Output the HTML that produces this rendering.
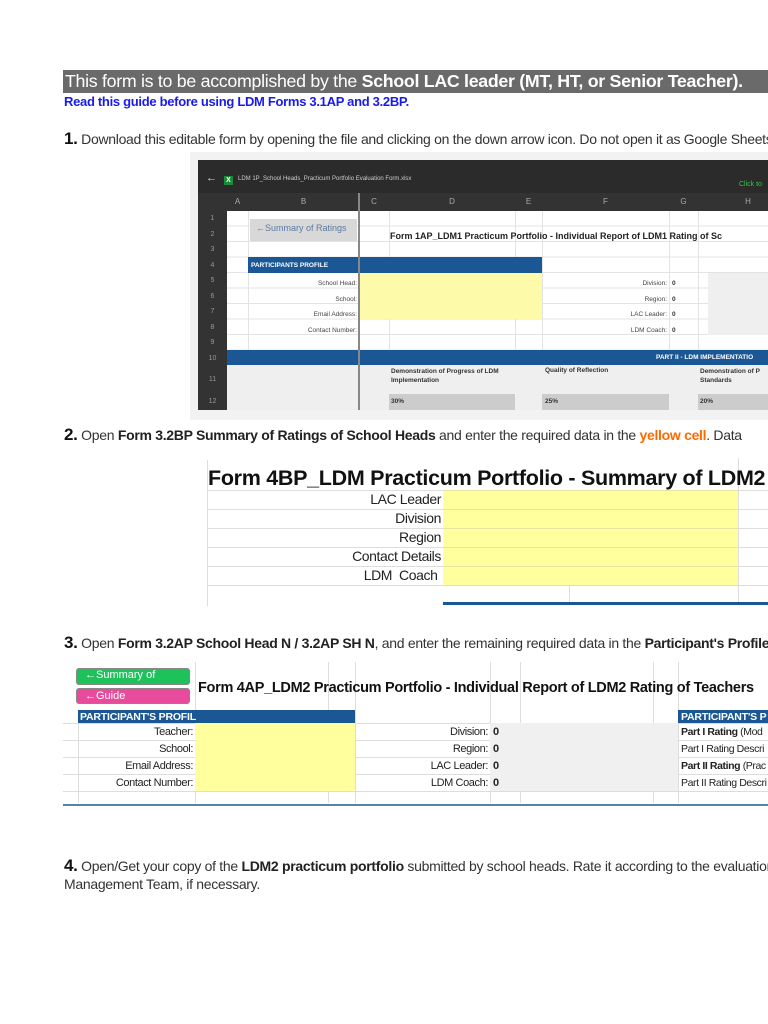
<!DOCTYPE html>
<html><head><meta charset="utf-8">
<style>
*{margin:0;padding:0;box-sizing:border-box}
html,body{width:768px;height:1024px;overflow:hidden;background:#fff;font-family:"Liberation Sans",Arial,sans-serif;color:#222}
.a{position:absolute;white-space:nowrap}
.t{font-size:14px;letter-spacing:-0.3px;color:#333}
.t b{color:#222}
.n{font-size:17px;font-weight:bold;color:#111}
.box{position:absolute;overflow:hidden}
.c{position:absolute}
</style></head><body>

<div class="a" style="left:63px;top:70px;width:705px;height:23px;background:#6a6a6a;color:#fff;font-size:17.8px;line-height:23px;padding-left:2px;letter-spacing:-0.3px;overflow:hidden">This form is to be accomplished by the <b>School LAC leader (MT, HT, or Senior Teacher).</b></div>
<div class="a" style="left:64px;top:94px;font-size:13px;font-weight:bold;color:#1a1aee;letter-spacing:-0.3px">Read this guide before using LDM Forms 3.1AP and 3.2BP.</div>

<div class="a t" style="left:64px;top:129px"><span class="n">1.</span> Download this editable form by opening the file and clicking on the down arrow icon. Do not open it as Google Sheets</div>

<!-- image 1 -->
<div class="box" style="left:190px;top:152px;width:578px;height:268px;background:#f2f2f2">
  <div class="c" style="left:8px;top:8px;width:570px;height:250px;background:#fff"></div>
  <div class="c" style="left:8px;top:8px;width:570px;height:33px;background:#2b2b2b"></div>
  <div class="c" style="left:16px;top:20px;color:#ddd;font-size:11px">←</div>
  <div class="c" style="left:34px;top:24px;width:9px;height:9px;background:#1d8a3a;color:#fff;font-size:7px;line-height:9px;text-align:center;font-weight:bold">X</div>
  <div class="c" style="left:48px;top:24px;color:#ccc;font-size:6px">LDM 1P_School Heads_Practicum Portfolio Evaluation Form.xlsx</div>
  <div class="c" style="left:549px;top:29px;color:#2ecc40;font-size:7px">Click to</div>
  <div class="c" style="left:8px;top:41px;width:570px;height:18px;background:#333"></div>
  <div class="c" style="left:8px;top:59px;width:29px;height:199px;background:#333"></div>
  <div class="c" style="left:37px;top:41px;width:21px;color:#aaa;font-size:8px;text-align:center;line-height:18px">A</div>
  <div class="c" style="left:58px;top:41px;width:111px;color:#aaa;font-size:8px;text-align:center;line-height:18px">B</div>
  <div class="c" style="left:169px;top:41px;width:30px;color:#aaa;font-size:8px;text-align:center;line-height:18px">C</div>
  <div class="c" style="left:199px;top:41px;width:126px;color:#aaa;font-size:8px;text-align:center;line-height:18px">D</div>
  <div class="c" style="left:325px;top:41px;width:27px;color:#aaa;font-size:8px;text-align:center;line-height:18px">E</div>
  <div class="c" style="left:352px;top:41px;width:127px;color:#aaa;font-size:8px;text-align:center;line-height:18px">F</div>
  <div class="c" style="left:479px;top:41px;width:29px;color:#aaa;font-size:8px;text-align:center;line-height:18px">G</div>
  <div class="c" style="left:508px;top:41px;width:100px;color:#aaa;font-size:8px;text-align:center;line-height:18px">H</div>
  <div class="c" style="left:8px;top:59px;width:29px;color:#999;font-size:7px;line-height:15.5px;text-align:center">1<br>2<br>3<br>4<br>5<br>6<br>7<br>8<br>9<br>10</div>
  <div class="c" style="left:8px;top:224px;width:29px;color:#999;font-size:7px;text-align:center">11</div>
  <div class="c" style="left:8px;top:246px;width:29px;color:#999;font-size:7px;text-align:center">12</div>
  <div class="c" style="left:37px;top:59px;width:541px;height:199px;background:repeating-linear-gradient(to bottom,transparent 0,transparent 14.5px,#e3e3e3 14.5px,#e3e3e3 15.5px)"></div>
  <div class="c" style="left:58px;top:59px;width:1px;height:199px;background:#e3e3e3"></div>
  <div class="c" style="left:199px;top:59px;width:1px;height:199px;background:#e3e3e3"></div>
  <div class="c" style="left:325px;top:59px;width:1px;height:199px;background:#e3e3e3"></div>
  <div class="c" style="left:352px;top:59px;width:1px;height:199px;background:#e3e3e3"></div>
  <div class="c" style="left:479px;top:59px;width:1px;height:199px;background:#e3e3e3"></div>
  <div class="c" style="left:508px;top:59px;width:1px;height:199px;background:#e3e3e3"></div>
  <div class="c" style="left:169px;top:121px;width:183px;height:46px;background:#fdfbaa"></div>
  <div class="c" style="left:518px;top:121px;width:60px;height:62px;background:#efefef"></div>
  <div class="c" style="left:58px;top:105px;width:294px;height:16px;background:#1b5795"></div>
  <div class="c" style="left:61px;top:110px;color:#fff;font-size:6.5px;font-weight:bold">PARTICIPANTS PROFILE</div>
  <div class="c" style="left:37px;top:198px;width:541px;height:15px;background:#1b5795"></div>
  <div class="c" style="left:466px;top:202px;color:#fff;font-size:6.5px;font-weight:bold">PART II - LDM IMPLEMENTATIO</div>
  <div class="c" style="left:37px;top:213px;width:541px;height:45px;background:#efefef"></div>
  <div class="c" style="left:199px;top:242px;width:126px;height:16px;background:#ccc"></div>
  <div class="c" style="left:352px;top:242px;width:127px;height:16px;background:#ccc"></div>
  <div class="c" style="left:508px;top:242px;width:70px;height:16px;background:#ccc"></div>
  <div class="c" style="left:201px;top:215px;font-size:6.5px;font-weight:bold;color:#333;line-height:9px">Demonstration of Progress of LDM<br>Implementation</div>
  <div class="c" style="left:355px;top:215px;font-size:6.5px;font-weight:bold;color:#333">Quality of Reflection</div>
  <div class="c" style="left:510px;top:215px;font-size:6.5px;font-weight:bold;color:#333;line-height:9px">Demonstration of P<br>Standards</div>
  <div class="c" style="left:201px;top:246px;font-size:6.5px;font-weight:bold;color:#333">30%</div>
  <div class="c" style="left:355px;top:246px;font-size:6.5px;font-weight:bold;color:#333">25%</div>
  <div class="c" style="left:510px;top:246px;font-size:6.5px;font-weight:bold;color:#333">20%</div>
  <div class="c" style="left:168px;top:41px;width:2px;height:217px;background:#888"></div>
  <div class="c" style="left:60px;top:67px;width:107px;height:22px;background:#d8d8d8;color:#5b7aa8;font-size:9px;line-height:18px;padding-left:6px">←Summary of Ratings</div>
  <div class="c" style="left:200px;top:79px;font-size:9px;font-weight:bold;color:#222">Form 1AP_LDM1 Practicum Portfolio - Individual Report of LDM1 Rating of Sc</div>
  <div class="c" style="left:58px;top:124px;width:109px;text-align:right;font-size:6.5px;color:#444;line-height:15.5px">School Head:<br>School:<br>Email Address:<br>Contact Number:</div>
  <div class="c" style="left:352px;top:124px;width:125px;text-align:right;font-size:6.5px;color:#444;line-height:15.5px">Division:<br>Region:<br>LAC Leader:<br>LDM Coach:</div>
  <div class="c" style="left:482px;top:124px;font-size:6.5px;font-weight:bold;color:#333;line-height:15.5px">0<br>0<br>0<br>0</div>
</div>

<div class="a t" style="left:64px;top:425px"><span class="n">2.</span> Open <b>Form 3.2BP Summary of Ratings of School Heads</b> and enter the required data in the <b style="color:#ff6a00">yellow cell</b>. Data</div>

<!-- image 2 -->
<div class="box" style="left:200px;top:458px;width:568px;height:150px">
  <div class="c" style="left:7px;top:2px;width:1px;height:146px;background:#ddd"></div>
  <div class="c" style="left:7px;top:32px;width:561px;height:113px;background:repeating-linear-gradient(to bottom,#ddd 0,#ddd 1px,transparent 1px,transparent 19px)"></div>
  <div class="c" style="left:243px;top:32px;width:295px;height:95px;background:#ffff9e"></div>
  <div class="c" style="left:243px;top:32px;width:295px;height:95px;background:repeating-linear-gradient(to bottom,#e5e5a0 0,#e5e5a0 1px,transparent 1px,transparent 19px)"></div>
  <div class="c" style="left:369px;top:127px;width:1px;height:18px;background:#ddd"></div>
  <div class="c" style="left:538px;top:0px;width:1px;height:145px;background:#ddd"></div>
  <div class="c" style="left:243px;top:144px;width:325px;height:3px;background:#1b5795"></div>
  <div class="c" style="left:8px;top:8px;font-size:21.5px;font-weight:bold;color:#111;letter-spacing:-0.3px">Form 4BP_LDM Practicum Portfolio - Summary of LDM2</div>
  <div class="c" style="left:8px;top:32px;width:233px;text-align:right;font-size:14px;line-height:19px;color:#222;letter-spacing:-0.4px">LAC Leader<br>Division<br>Region<br>Contact Details<br>LDM&nbsp; Coach&nbsp;</div>
</div>

<div class="a t" style="left:64px;top:633px"><span class="n">3.</span> Open <b>Form 3.2AP School Head N / 3.2AP SH N</b>, and enter the remaining required data in the <b>Participant's Profile</b></div>

<!-- image 3 -->
<div class="box" style="left:63px;top:662px;width:705px;height:146px">
  <div class="c" style="left:0;top:61px;width:705px;height:80px;background:repeating-linear-gradient(to bottom,#ddd 0,#ddd 1px,transparent 1px,transparent 17px)"></div>
  <div class="c" style="left:132px;top:0;width:1px;height:141px;background:#ddd"></div>
  <div class="c" style="left:265px;top:0;width:1px;height:141px;background:#ddd"></div>
  <div class="c" style="left:292px;top:0;width:1px;height:141px;background:#ddd"></div>
  <div class="c" style="left:427px;top:0;width:1px;height:141px;background:#ddd"></div>
  <div class="c" style="left:457px;top:0;width:1px;height:141px;background:#ddd"></div>
  <div class="c" style="left:590px;top:0;width:1px;height:141px;background:#ddd"></div>
  <div class="c" style="left:615px;top:0;width:1px;height:141px;background:#ddd"></div>
  <div class="c" style="left:15px;top:61px;width:1px;height:80px;background:#ddd"></div>
  <div class="c" style="left:132px;top:61px;width:160px;height:68px;background:#ffff9e"></div>
  <div class="c" style="left:427px;top:61px;width:188px;height:68px;background:#f0f0f0"></div>
  <div class="c" style="left:15px;top:48px;width:277px;height:13px;background:#1b5795"></div>
  <div class="c" style="left:17px;top:49px;color:#fff;font-size:10.5px;font-weight:bold;letter-spacing:-0.2px">PARTICIPANT'S PROFIL</div>
  <div class="c" style="left:615px;top:48px;width:90px;height:13px;background:#1b5795"></div>
  <div class="c" style="left:618px;top:49px;color:#fff;font-size:10.5px;font-weight:bold;letter-spacing:-0.2px">PARTICIPANT'S P</div>
  <div class="c" style="left:0;top:142px;width:705px;height:2px;background:#5a7fa8"></div>
  <div class="c" style="left:15px;top:62px;width:115px;text-align:right;font-size:11px;line-height:17px;color:#222;letter-spacing:-0.4px">Teacher:<br>School:<br>Email Address:<br>Contact Number:</div>
  <div class="c" style="left:300px;top:62px;width:125px;text-align:right;font-size:11px;line-height:17px;color:#222;letter-spacing:-0.4px">Division:<br>Region:<br>LAC Leader:<br>LDM Coach:</div>
  <div class="c" style="left:430px;top:62px;font-size:11px;line-height:17px;color:#222;font-weight:bold">0<br>0<br>0<br>0</div>
  <div class="c" style="left:618px;top:62px;font-size:10.5px;line-height:17px;color:#222;letter-spacing:-0.4px"><b>Part I Rating</b> (Mod<br>Part I Rating Descri<br><b>Part II Rating</b> (Prac<br>Part II Rating Descri</div>
  <div class="c" style="left:13px;top:6px;width:114px;height:17px;background:#1ec15a;border:1px solid #888;border-radius:3px;color:#fff;font-size:11px;line-height:13px;padding-left:8px">←Summary of</div>
  <div class="c" style="left:13px;top:26px;width:114px;height:16px;background:#e94b9c;border:1px solid #888;border-radius:3px;color:#fff;font-size:11px;line-height:15px;padding-left:8px">←Guide</div>
  <div class="c" style="left:135px;top:18px;font-size:14.5px;font-weight:bold;color:#111;letter-spacing:-0.3px">Form 4AP_LDM2 Practicum Portfolio - Individual Report of LDM2 Rating of Teachers</div>
</div>

<div class="a t" style="left:64px;top:856px"><span class="n">4.</span> Open/Get your copy of the <b>LDM2 practicum portfolio</b> submitted by school heads. Rate it according to the evaluation</div>
<div class="a t" style="left:64px;top:876px">Management Team, if necessary.</div>

</body></html>
